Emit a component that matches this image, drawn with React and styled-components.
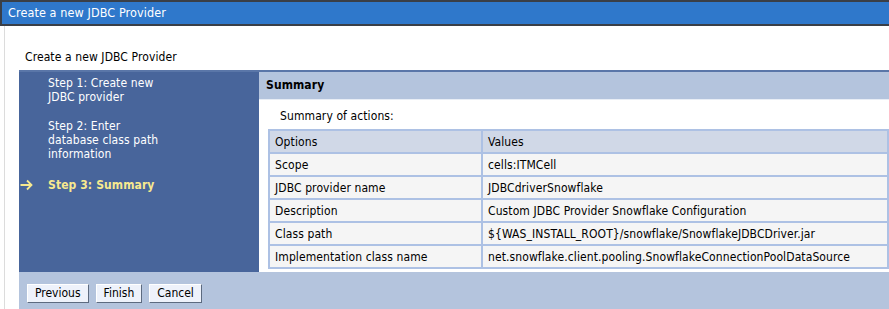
import styled, { createGlobalStyle } from "styled-components";

const GlobalStyle = createGlobalStyle`
  html, body {
    margin: 0;
    padding: 0;
    background: #ffffff;
  }
  body {
    font-family: "DejaVu Sans Condensed", "DejaVu Sans", sans-serif;
    font-size: 12px;
    letter-spacing: 0.1px;
    color: #000;
  }
`;

const Window = styled.div`
  width: 889px;
  height: 309px;
  overflow: hidden;
  display: flex;
  flex-direction: column;
`;

const TitleBar = styled.div`
  height: 22px;
  background: #2f78cb;
  border: 2px solid #3a3f47;
  border-right: none;
  color: #fff;
  font-size: 12.5px;
  line-height: 22px;
  padding-left: 6px;
`;

const Frame = styled.div`
  flex: 1;
  margin-left: 4px;
  border-left: 1px solid #dcdcdc;
  padding-left: 14px;
  display: flex;
  flex-direction: column;
`;

const Heading = styled.div`
  height: 44px;
  padding-left: 6px;
  display: flex;
  align-items: flex-end;
  line-height: 20px;
  padding-bottom: 3px;
  box-sizing: border-box;
`;

const Wizard = styled.div`
  flex: 1;
  display: flex;
  flex-direction: column;
  border-top: 2px solid #5a76a8;
`;

const Body = styled.div`
  display: flex;
  height: 200px;
`;

const Nav = styled.ul`
  list-style: none;
  margin: 0;
  width: 240px;
  background: #48659b;
  padding: 4px 0 0 0;
`;

const Step = styled.li`
  position: relative;
  padding-left: 29px;
  margin-bottom: ${(p) => (p.$gap ? p.$gap : 0)}px;
  color: ${(p) => (p.$active ? "#f7e98f" : "#ffffff")};
  font-weight: ${(p) => (p.$active ? "bold" : "normal")};
  line-height: 14px;
  width: 118px;
  white-space: ${(p) => (p.$active ? "nowrap" : "normal")};
`;

const Arrow = styled.svg`
  position: absolute;
  left: 1px;
  top: 1px;
`;

const Content = styled.div`
  flex: 1;
  display: flex;
  flex-direction: column;
  background: #fff;
`;

const SectionHead = styled.div`
  height: 27px;
  background: #b4c4dd;
  font-weight: bold;
  line-height: 27px;
  padding-left: 7px;
  border-bottom: 1px solid #e8edf5;
`;

const Caption = styled.div`
  padding: 9px 0 0 21px;
  height: 20px;
`;

const Table = styled.table`
  margin-left: 9px;
  width: calc(100% - 9px);
  border-collapse: collapse;
  border: 2px solid #adc1e4;
`;

const Cell = styled.td`
  height: 21px;
  padding: 0 0 0 5px;
  border: 2px solid #adc1e4;
  background: ${(p) => (p.$head ? "#d0d8e7" : "#f5f5f5")};
  width: ${(p) => (p.$w ? p.$w : "auto")};
  white-space: nowrap;
  font-weight: normal;
  text-align: left;
`;

const ButtonBar = styled.div`
  flex: 1;
  background: #b4c4dd;
  display: flex;
  gap: 7px;
  align-items: flex-start;
  padding: 12px 0 0 8px;
`;

const Button = styled.button`
  font: inherit;
  font-size: 12px;
  height: 19px;
  padding: 0 7px;
  background: #eef2fb;
  color: #000;
  border: 1px solid;
  border-color: #ffffff #5d6b80 #5d6b80 #ffffff;
  line-height: 15px;
`;

const rows = [
  ["Scope", "cells:ITMCell"],
  ["JDBC provider name", "JDBCdriverSnowflake"],
  ["Description", "Custom JDBC Provider Snowflake Configuration"],
  ["Class path", "${WAS_INSTALL_ROOT}/snowflake/SnowflakeJDBCDriver.jar"],
  ["Implementation class name", "net.snowflake.client.pooling.SnowflakeConnectionPoolDataSource"],
];

export default function App() {
  return (
    <Window>
      <GlobalStyle />
      <TitleBar>Create a new JDBC Provider</TitleBar>
      <Frame>
        <Heading>Create a new JDBC Provider</Heading>
        <Wizard>
          <Body>
            <Nav>
              <Step $gap={15}>Step 1: Create new JDBC provider</Step>
              <Step $gap={17}>Step 2: Enter database class path information</Step>
              <Step $active>
                <Arrow width="13" height="12" viewBox="0 0 13 12">
                  <path d="M0.5 6H11.5M7 1.5L11.5 6L7 10.5" fill="none" stroke="#f7e98f" strokeWidth="1.8" />
                </Arrow>
                Step 3: Summary
              </Step>
            </Nav>
            <Content>
              <SectionHead>Summary</SectionHead>
              <Caption>Summary of actions:</Caption>
              <Table>
                <thead>
                  <tr>
                    <Cell as="th" $head $w="206px">Options</Cell>
                    <Cell as="th" $head>Values</Cell>
                  </tr>
                </thead>
                <tbody>
                  {rows.map(([k, v]) => (
                    <tr key={k}>
                      <Cell>{k}</Cell>
                      <Cell>{v}</Cell>
                    </tr>
                  ))}
                </tbody>
              </Table>
            </Content>
          </Body>
          <ButtonBar>
            <Button>Previous</Button>
            <Button>Finish</Button>
            <Button>Cancel</Button>
          </ButtonBar>
        </Wizard>
      </Frame>
    </Window>
  );
}
